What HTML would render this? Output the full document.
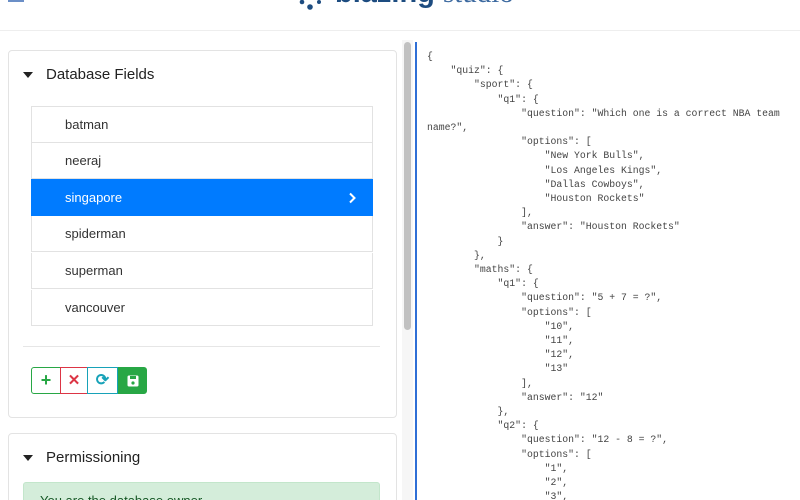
<!DOCTYPE html>
<html><head><meta charset="utf-8"><style>
html,body{margin:0;width:800px;height:500px;overflow:hidden}
body{background:#fff;font-family:"Liberation Sans",sans-serif;position:relative}
.abs{position:absolute}
.card{position:absolute;left:8px;width:387px;border:1px solid #e3e3e3;border-radius:4px;background:#fff}
.hd{position:absolute;left:37px;font-size:15px;color:#222}
.caret{position:absolute;left:16px;width:0;height:0;border-left:5px solid transparent;border-right:5px solid transparent;border-top:6px solid #222}
.item{position:absolute;left:31px;height:36px;border:1px solid #e2e2e2;border-top:none;font-size:13px;color:#333;line-height:36px;padding-left:33px;box-sizing:border-box;width:342px}
.code{position:absolute;left:427px;top:50px;font-family:"Liberation Mono",monospace;font-size:9.8px;line-height:14.2px;color:#444;white-space:pre;margin:0}
.btn{position:absolute;top:367px;height:27px;box-sizing:border-box;border:1px solid;text-align:center;line-height:25px;font-weight:bold}
</style></head><body>
<div class="abs" style="left:0;top:30px;width:800px;height:1px;background:#eee"></div>
<div class="abs" style="left:8px;top:0;width:16px;height:2px;background:#6b8fc7"></div>
<svg class="abs" style="left:298px;top:0" width="30" height="12"><circle cx="4" cy="2" r="2.3" fill="#1d4c80"/><circle cx="12" cy="7" r="2.8" fill="#1d4c80"/><circle cx="21" cy="2" r="2" fill="#1d4c80"/></svg>
<div class="abs" style="left:335px;top:-23px;font-size:29px;color:#1d4c80;white-space:nowrap"><b>blazing</b> <span style="font-family:'Liberation Serif',serif;font-weight:normal;color:#3d6aa0">studio</span></div>

<div class="card" style="top:50px;height:366px"></div>
<div class="caret" style="left:23px;top:72px"></div>
<div class="hd" style="left:46px;top:66px">Database Fields</div>
<div class="abs" style="left:31px;top:106px;width:342px;height:1px;background:#e2e2e2"></div>
<div class="item" style="top:107px">batman</div>
<div class="item" style="top:143px">neeraj</div>
<div class="item" style="top:179px;background:#007bff;border-color:#007bff;color:#fff;height:37px;line-height:38px">singapore</div>
<svg class="abs" style="left:347px;top:192px" width="10" height="12"><path d="M3 1.5 L7.5 6 L3 10.5" stroke="#fff" stroke-width="2" fill="none"/></svg>
<div class="item" style="top:216px">spiderman</div>
<div class="item" style="top:253px">superman</div>
<div class="item" style="top:290px">vancouver</div>
<div class="abs" style="left:23px;top:346px;width:357px;height:1px;background:#e6e6e6"></div>
<div class="btn" style="left:31px;width:30px;border-color:#28a745;color:#28a745;border-radius:3px 0 0 3px;font-size:18px">+</div>
<div class="btn" style="left:60px;width:28px;border-color:#dc3545;color:#dc3545;font-size:15px">✕</div>
<div class="btn" style="left:87px;width:31px;border-color:#17a2b8;color:#17a2b8;font-size:16px">⟳</div>
<div class="btn" style="left:118px;width:29px;border-color:#28a745;background:#28a745;border-radius:0 3px 3px 0"><svg width="12" height="12" style="margin-top:7px"><rect x="0.5" y="0.5" width="11" height="11" rx="1.5" fill="#fff"/><rect x="3" y="1" width="6" height="3" fill="#28a745"/><circle cx="6" cy="8" r="1.6" fill="#28a745"/></svg></div>

<div class="card" style="top:433px;height:80px"></div>
<div class="caret" style="left:23px;top:455px"></div>
<div class="hd" style="left:46px;top:449px">Permissioning</div>
<div class="abs" style="left:23px;top:482px;width:357px;height:30px;background:#d4edda;border:1px solid #c3e6cb;border-radius:3px;box-sizing:border-box;padding:10px 16px;font-size:13px;color:#155724">You are the database owner.</div>

<div class="abs" style="left:402px;top:40px;width:11px;height:460px;background:#f6f6f6"></div>
<div class="abs" style="left:404px;top:42px;width:7px;height:288px;background:#c1c1c1;border-radius:4px"></div>
<div class="abs" style="left:415px;top:42px;width:2px;height:460px;background:#2f6fd6"></div>
<pre class="code">{
    "quiz": {
        "sport": {
            "q1": {
                "question": "Which one is a correct NBA team
name?",
                "options": [
                    "New York Bulls",
                    "Los Angeles Kings",
                    "Dallas Cowboys",
                    "Houston Rockets"
                ],
                "answer": "Houston Rockets"
            }
        },
        "maths": {
            "q1": {
                "question": "5 + 7 = ?",
                "options": [
                    "10",
                    "11",
                    "12",
                    "13"
                ],
                "answer": "12"
            },
            "q2": {
                "question": "12 - 8 = ?",
                "options": [
                    "1",
                    "2",
                    "3",
</pre>
</body></html>
